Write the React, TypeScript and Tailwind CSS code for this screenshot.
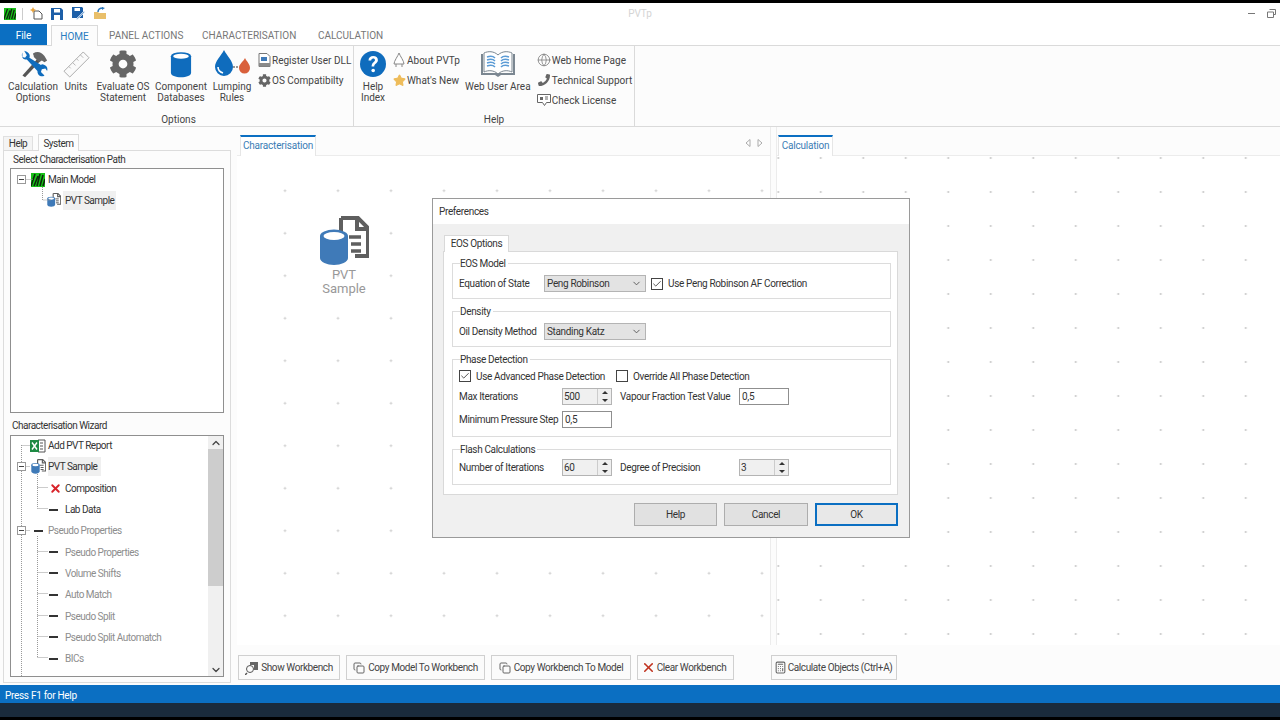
import React from 'react';
import { Globe, Star, X, Copy, Calculator, ChevronUp, ChevronDown, Check } from 'lucide-react';
import { FaCog, FaPhoneAlt } from 'react-icons/fa';

const font = "font-['Roboto','Noto_Sans',sans-serif]";

function AppLogo({ size = 14 }: { size?: number }) {
  return (
    <svg width={size} height={size} viewBox="0 0 14 14">
      <rect width="14" height="14" fill="#19c219" />
      <path d="M0 13 4 1M3 13 7 3M6 13 9 1M9 13 12 2M12 13 14 6" stroke="#0c2a0c" strokeWidth="1.6" fill="none" />
    </svg>
  );
}

function ToolsIcon() {
  return (
    <svg width="30" height="28" viewBox="0 0 34 30">
      <path d="M5 28 22 9l3 3L8 30Z" fill="#555" />
      <path d="M17 3c5-3 9-2 13 3l3 5-3 2-3-2-3 2-6-6c0-2-1-3-1-4Z" fill="#666" />
      <path d="M5 2c-1 2-1 5 1 7 2 1 3 1 4 1l12 13c0 3 1 5 4 6 2 0 3 0 4-1l-4-4 1-3 4-1 2 3c1-3 0-6-3-7-2-1-3-1-4 0L13 8c1-3 0-5-3-7L7 0l3 5-2 3-3-1Z" fill="#0f6cbd" />
    </svg>
  );
}

function RulerIcon() {
  return (
    <svg width="27" height="27" viewBox="0 0 28 28">
      <path d="M1 21 21 1l6 6L7 27Z" fill="#fafafa" stroke="#a9a9a9" strokeWidth="1" />
      <path d="M6 16l2 2M10 12l3 3M14 8l2 2M18 4l3 3" stroke="#b5b5b5" strokeWidth="1" />
    </svg>
  );
}

function CylinderIcon() {
  return (
    <svg width="22" height="27" viewBox="0 0 24 28">
      <path d="M1 5v18c0 3 5 5 11 5s11-2 11-5V5Z" fill="#0f6cbd" />
      <ellipse cx="12" cy="5" rx="11" ry="4.5" fill="#0f6cbd" />
      <ellipse cx="12" cy="5" rx="8.5" ry="2.8" fill="#fff" />
    </svg>
  );
}

function DropsIcon() {
  return (
    <svg width="38" height="28" viewBox="0 0 38 28">
      <path d="M11 0c3 6 9 11 9 17a9 9 0 0 1-18 0c0-6 6-11 9-17Z" fill="#0f6cbd" />
      <path d="M5 17c0 3 2 5 5 6" stroke="#fff" strokeWidth="1.6" fill="none" />
      <path d="M20 17h6" stroke="#777" strokeWidth="1.5" strokeDasharray="2 1" />
      <path d="M32 8c2 4 5 6 5 10a5.500 5.500 0 0 1-11 0c0-4 4-6 6-10Z" fill="#d9603b" />
    </svg>
  );
}

function HelpIcon() {
  return (
    <svg width="26" height="26" viewBox="0 0 26 26">
      <circle cx="13" cy="13" r="13" fill="#0f6cbd" />
      <path d="M8.500 9.500c0-3 2-4.500 4.700-4.500 2.800 0 4.700 1.600 4.700 4 0 3.500-3.700 3.400-3.700 6.500h-2.600c0-4.300 3.400-4.200 3.400-6.400 0-1-.7-1.700-1.800-1.700-1.200 0-1.900.8-2 2.100Z" fill="#fff" />
      <circle cx="13.200" cy="19.500" r="1.800" fill="#fff" />
    </svg>
  );
}

function BookIcon() {
  return (
    <svg width="36" height="28" viewBox="0 0 36 28">
      <path d="M1 4v21h14l3 2 3-2h14V4h-2v19H3V4Z" fill="#7b8791" />
      <path d="M18 5C14 1 8 1 4 3v19c4-2 10-2 14 2 4-4 10-4 14-2V3c-4-2-10-2-14 2Z" fill="#fff" stroke="#7b8791" strokeWidth="1" />
      <path d="M7 7c3-1 6-1 8 1M7 10c3-1 6-1 8 1M7 13c3-1 6-1 8 1M7 16c3-1 6-1 8 1M21 8c2-2 5-2 8-1M21 11c2-2 5-2 8-1M21 14c2-2 5-2 8-1M21 17c2-2 5-2 8-1" stroke="#5b9bd5" strokeWidth="1.6" fill="none" />
    </svg>
  );
}

function SampleIcon({ size = 14 }: { size?: number }) {
  return (
    <svg width={size} height={size} viewBox="0 0 50 48">
      <path d="M22 1h17l10 10v28H36" fill="none" stroke="#5f5f5f" strokeWidth="4" />
      <path d="M22 17V1M38 1v11h11" fill="none" stroke="#5f5f5f" strokeWidth="4" />
      <path d="M30 20h12M32 27h10M32 34h10" stroke="#5f5f5f" strokeWidth="3.500" />
      <path d="M1 19v22c0 4 7 7 14 7s14-3 14-7V19Z" fill="#3f7ab8" />
      <ellipse cx="15" cy="19" rx="14" ry="6.500" fill="#3f7ab8" />
      <ellipse cx="15" cy="19" rx="10.500" ry="4" fill="#fff" />
    </svg>
  );
}

function SmallDoc() {
  return (
    <svg width="13" height="14" viewBox="0 0 13 14">
      <path d="M1 .5h8l3 3v10H1Z" fill="#fff" stroke="#777" />
      <rect x="3" y="4" width="6" height="4" fill="#3f7ab8" />
      <rect x="1" y="10" width="11" height="3.500" fill="#8a8a8a" />
    </svg>
  );
}

function ExcelIcon() {
  return (
    <svg width="16" height="14" viewBox="0 0 16 14">
      <path d="M8 1h7v12H8" fill="#fff" stroke="#555" />
      <path d="M10 4h3M10 7h3M10 10h3" stroke="#555" />
      <rect y="1" width="9" height="12" fill="#1e8a44" />
      <path d="M2 3.500 7 10.500M7 3.500 2 10.500" stroke="#fff" strokeWidth="1.400" />
    </svg>
  );
}

function Expander({ className }: { className: string }) {
  return (
    <span className={`absolute w-[9px] h-[9px] border border-[#999] bg-white flex items-center justify-center ${className}`}>
      <span className="w-[5px] h-px bg-[#444]" />
    </span>
  );
}

function LargeButton({ icon, lines, className }: { icon: React.ReactNode; lines: string[]; className: string }) {
  return (
    <div className={`flex flex-col items-center shrink-0 ${className}`}>
      <div className="h-[34px] flex items-center justify-center">{icon}</div>
      <div className="text-center text-[10px] leading-[11px] text-[#444] whitespace-nowrap">
        {lines.map(l => <div key={l}>{l}</div>)}
      </div>
    </div>
  );
}

function SmallButton({ icon, label }: { icon: React.ReactNode; label: string }) {
  return (
    <div className="h-[20px] flex items-center gap-[1px] text-[10px] text-[#444] whitespace-nowrap">
      <span className="w-[14px] flex justify-center shrink-0">{icon}</span>
      {label}
    </div>
  );
}

const WIZARD_ROWS = [
  { label: 'Add PVT Report', level: 0, icon: 'excel', dim: false },
  { label: 'PVT Sample', level: 0, icon: 'sample', dim: false, selected: true },
  { label: 'Composition', level: 1, icon: 'x', dim: false },
  { label: 'Lab Data', level: 1, icon: 'dash', dim: false },
  { label: 'Pseudo Properties', level: 0, icon: 'dash', dim: true },
  { label: 'Pseudo Properties', level: 1, icon: 'dash', dim: true },
  { label: 'Volume Shifts', level: 1, icon: 'dash', dim: true },
  { label: 'Auto Match', level: 1, icon: 'dash', dim: true },
  { label: 'Pseudo Split', level: 1, icon: 'dash', dim: true },
  { label: 'Pseudo Split Automatch', level: 1, icon: 'dash', dim: true },
  { label: 'BICs', level: 1, icon: 'dash', dim: true },
];

function WizardIcon({ kind }: { kind: string }) {
  if (kind === 'excel') return <ExcelIcon />;
  if (kind === 'sample') return <SampleIcon size={15} />;
  if (kind === 'x') return <X size={13} strokeWidth={3.5} className="text-[#d8232a]" />;
  return <span className="w-[9px] h-[2px] bg-[#333]" />;
}

function TreeLines({ d, h }: { d: string; h: number }) {
  return (
    <svg className="absolute left-0 top-0" width="200" height={h}>
      <path d={d} stroke="#999" strokeDasharray="1 1" fill="none" />
    </svg>
  );
}

function Select({ value, className }: { value: string; className: string }) {
  return (
    <div className={`h-[17px] bg-[#e3e3e3] border border-[#b4b4b4] flex items-center justify-between pl-[2px] pr-[3px] ${className}`}>
      <span>{value}</span>
      <ChevronDown size={11} className="text-[#555]" />
    </div>
  );
}

function CheckBox({ checked, label }: { checked?: boolean; label: string }) {
  return (
    <div className="flex items-center gap-[5px] whitespace-nowrap">
      <span className="w-[12px] h-[12px] border border-[#444] bg-white flex items-center justify-center">
        {checked && <Check size={10} strokeWidth={2} className="text-[#333]" />}
      </span>
      {label}
    </div>
  );
}

function Spinner({ value }: { value: string }) {
  return (
    <div className="w-[50px] h-[17px] border border-[#b4b4b4] bg-[#f0f0f0] flex items-center justify-between pl-[1px]">
      <span>{value}</span>
      <span className="w-[14px] h-full flex flex-col bg-[#efefef] border-l border-[#ccc]">
        <span className="flex-1 flex items-center justify-center"><span className="w-0 h-0 border-x-[3px] border-x-transparent border-b-[3px] border-b-[#333]" /></span>
        <span className="flex-1 flex items-center justify-center"><span className="w-0 h-0 border-x-[3px] border-x-transparent border-t-[3px] border-t-[#333]" /></span>
      </span>
    </div>
  );
}

function TextBox({ value }: { value: string }) {
  return <div className="w-[50px] h-[17px] border border-[#8f8f8f] bg-white flex items-center pl-[2px]">{value}</div>;
}

function Group({ title, className, children }: { title: string; className: string; children: React.ReactNode }) {
  return (
    <fieldset className={`border border-[#dcdcdc] px-[6px] ${className}`}>
      <legend className="ml-[1px] pr-[2px] leading-[16px] h-[14px]">{title}</legend>
      {children}
    </fieldset>
  );
}

function BottomButton({ icon, label, className }: { icon: React.ReactNode; label: string; className: string }) {
  return (
    <div className={`h-[25px] border border-[#d0d0d0] bg-[#fbfbfb] flex items-center justify-center gap-[1px] text-[10px] tracking-[-0.4px] text-[#444] whitespace-nowrap ${className}`}>
      {icon}
      {label}
    </div>
  );
}

const dot = 'bg-[radial-gradient(circle,#c8c8c8_0.9px,transparent_1.2px)]';

export default function App() {
  return (
    <div className={`relative w-[1280px] h-[720px] overflow-hidden flex flex-col bg-[#fcfcfc] text-[#333] ${font}`}>
      <div className="h-[3px] bg-black shrink-0" />

      {/* title bar */}
      <div className="relative h-[21px] shrink-0 bg-white flex items-center pl-[4px]">
        <AppLogo size={12} />
        <span className="ml-[6px] w-px h-[12px] bg-[#ccc]" />
        <span className="ml-[7px]">
          <svg width="13" height="13" viewBox="0 0 13 13"><path d="M4 4h5l3 3v5H4Z" fill="#fff" stroke="#555" /><path d="M3 0l1 2 2 1-2 1-1 2-1-2-2-1 2-1Z" fill="#e8a33d" /></svg>
        </span>
        <span className="ml-[8px]">
          <svg width="12" height="12" viewBox="0 0 12 12"><path d="M0 0h10l2 2v10H0Z" fill="#1d5fa8" /><rect x="3" y="1" width="6" height="3.500" fill="#fff" /><rect x="3" y="7" width="6" height="5" fill="#fff" /></svg>
        </span>
        <span className="ml-[9px]">
          <svg width="13" height="13" viewBox="0 0 13 13"><path d="M0 0h10l1 1v10H0Z" fill="#1d5fa8" /><rect x="2.500" y="1" width="5.500" height="3" fill="#fff" /><path d="M5 11l7-7 1 1-7 7-2 1Z" fill="#7ba6d4" stroke="#fff" strokeWidth=".6" /></svg>
        </span>
        <span className="ml-[9px]">
          <svg width="13" height="13" viewBox="0 0 13 13"><path d="M0 5h4l1 1h7v6H0Z" fill="#e9bf6a" /><path d="M4 5c0-3 2-4 5-4" stroke="#2d78bd" strokeWidth="1.500" fill="none" /><path d="M8 0l3 1-3 2Z" fill="#2d78bd" /></svg>
        </span>
        <span className="absolute left-0 right-0 text-center text-[10px] text-[#d4d4d4]">PVTp</span>
        <span className="absolute right-[25px] w-[7px] h-px bg-[#777]" />
        <svg className="absolute right-[4px]" width="9" height="9" viewBox="0 0 9 9"><path d="M2.500.5h6v5h-2M.5 3h6v5.500h-6Z" fill="none" stroke="#777" /></svg>
      </div>

      {/* ribbon tabs */}
      <div className="h-[22px] shrink-0 flex items-end bg-white border-b border-[#dadada] text-[10px] text-[#777]">
        <div className="w-[47px] h-[21px] pt-[1px] bg-[#0b6fc2] text-white flex items-center justify-center">File</div>
        <div className="ml-[4px] w-[47px] h-[21px] -mb-px border border-b-0 border-[#dadada] bg-[#fcfcfc] text-[#2b7cc0] flex items-center justify-center">HOME</div>
        <div className="ml-[11px] w-[74px] h-[21px] pt-[1px] flex items-center whitespace-nowrap">PANEL ACTIONS</div>
        <div className="ml-[19px] w-[96px] h-[21px] pt-[1px] flex items-center whitespace-nowrap">CHARACTERISATION</div>
        <div className="ml-[20px] h-[21px] pt-[1px] flex items-center whitespace-nowrap">CALCULATION</div>
      </div>

      {/* ribbon */}
      <div className="h-[81px] shrink-0 flex border-b border-[#dadada] bg-[#fcfcfc]">
        <div className="w-[354px] shrink-0 border-r border-[#dadada] flex flex-col">
          <div className="flex h-[65px] pt-[1px]">
            <LargeButton icon={<ToolsIcon />} lines={['Calculation', 'Options']} className="w-[48px] ml-[9px]" />
            <LargeButton icon={<RulerIcon />} lines={['Units']} className="w-[26px] ml-[6px]" />
            <LargeButton icon={<FaCog size={28} className="text-[#666]" />} lines={['Evaluate OS', 'Statement']} className="w-[54px] ml-[7px]" />
            <LargeButton icon={<CylinderIcon />} lines={['Component', 'Databases']} className="w-[50px] ml-[6px]" />
            <LargeButton icon={<DropsIcon />} lines={['Lumping', 'Rules']} className="w-[40px] ml-[6px]" />
            <div className="ml-[5px] mt-[3px] flex flex-col">
              <SmallButton icon={<SmallDoc />} label="Register User DLL" />
              <SmallButton icon={<FaCog size={13} className="text-[#666]" />} label="OS Compatibilty" />
            </div>
          </div>
          <div className="text-center text-[10px] text-[#444] leading-[12px] mt-[4px] pl-[4px]">Options</div>
        </div>
        <div className="w-[281px] shrink-0 border-r border-[#dadada] flex flex-col">
          <div className="flex h-[65px] pt-[1px]">
            <LargeButton icon={<HelpIcon />} lines={['Help', 'Index']} className="w-[30px] ml-[4px]" />
            <div className="ml-[4px] mt-[3px] flex flex-col">
              <SmallButton icon={<svg width="12" height="14" viewBox="0 0 12 14"><path d="M6 0c1 3 5 8 5 11H1c0-3 4-8 5-11Z" fill="#fff" stroke="#888" /><path d="M3 11v3M9 11v3" stroke="#888" /></svg>} label="About PVTp" />
              <SmallButton icon={<Star size={13} fill="#eebc5a" className="text-[#eebc5a]" />} label="What's New" />
            </div>
            <LargeButton icon={<BookIcon />} lines={['Web User Area']} className="w-[66px] ml-[5px]" />
            <div className="ml-[6px] mt-[3px] flex flex-col">
              <SmallButton icon={<Globe size={14} strokeWidth={1.3} className="text-[#777]" />} label="Web Home Page" />
              <SmallButton icon={<FaPhoneAlt size={12} className="text-[#666] -scale-x-100" />} label="Technical Support" />
              <SmallButton icon={<svg width="14" height="12" viewBox="0 0 14 12"><path d="M.5.5h13v8h-4l-2 3-2-3h-5Z" fill="#fff" stroke="#666" /><rect x="3" y="3" width="3" height="3" fill="#666" /><path d="M8 3h3M8 5h3" stroke="#666" /></svg>} label="Check License" />
            </div>
          </div>
          <div className="text-center text-[10px] text-[#444] leading-[12px] mt-[4px]">Help</div>
        </div>
      </div>

      {/* main area */}
      <div className="flex-1 min-h-0 flex">
        {/* left column */}
        <div className="w-[232px] shrink-0 pl-[3px] pt-[6px] flex flex-col text-[10px] tracking-[-0.5px]">
          <div className="flex items-end h-[17px] text-[#333]">
            <div className="w-[30px] h-[14px] bg-[#f4f4f4] border border-b-0 border-[#e0e0e0] flex items-center justify-center">Help</div>
            <div className="ml-[5px] w-[41px] h-[17px] -mb-px z-10 bg-[#fdfdfd] border border-b-0 border-[#dcdcdc] flex items-center justify-center">System</div>
          </div>
          <div className="w-[228px] h-[533px] border border-[#dcdcdc] pl-[6px] flex flex-col">
            <div className="h-[17px] pl-[3px] flex items-center">Select Characterisation Path</div>
            <div className="relative w-[214px] h-[245px] border border-[#8f8f8f] bg-white">
              <TreeLines d="M15.500 10.500H22M31.500 18V31H40" h={60} />
              <Expander className="left-[6px] top-[6px]" />
              <div className="h-[21px] flex items-center pl-[20px] gap-[3px]">
                <AppLogo size={14} />
                <span>Main Model</span>
              </div>
              <div className="h-[20px] flex items-center pl-[36px]">
                <SampleIcon size={14} />
                <span className="ml-[2px] h-[19px] px-[2px] bg-[#f0f0f0] flex items-center">PVT Sample</span>
              </div>
            </div>
            <div className="h-[17px] mt-[4px] mb-[1px] pl-[2px] flex items-center">Characterisation Wizard</div>
            <div className="relative w-[214px] h-[242px] border border-[#8f8f8f] bg-white overflow-hidden">
              <TreeLines d="M10.500 9V242M10.500 9.500H19M10.500 30.500H19M10.500 94.500H19M26.500 36V72.500M26.500 51.500H37M26.500 72.500H37M26.500 100V221.500M26.500 115.500H37M26.500 136.500H37M26.500 157.500H37M26.500 179.500H37M26.500 200.500H37M26.500 221.500H37" h={242} />
              <Expander className="left-[6px] top-[26px]" />
              <Expander className="left-[6px] top-[90px]" />
              <div className="-mt-[1px]">
                {WIZARD_ROWS.map((row, i) => (
                  <div key={i} className={`relative h-[21.3px] flex items-center ${row.level === 0 ? 'pl-[19px]' : 'pl-[38px]'} ${row.dim ? 'text-[#8d8d8d]' : 'text-[#333]'}`}>
                    <span className={`${row.level === 0 ? 'w-[18px] pr-[2px] justify-center' : 'w-[16px]'} flex items-center shrink-0`}>
                      <WizardIcon kind={row.icon} />
                    </span>
                    <span className={row.selected ? 'bg-[#f0f0f0] h-[19px] flex items-center pr-[4px] -mr-[4px]' : ''}>{row.label}</span>
                  </div>
                ))}
              </div>
              <div className="absolute right-0 top-0 bottom-0 w-[15px] bg-[#f0f0f0] flex flex-col items-center">
                <div className="h-[13px] flex items-center"><ChevronUp size={12} strokeWidth={2.5} className="text-[#444]" /></div>
                <div className="w-full h-[137px] bg-[#cdcdcd]" />
                <div className="mt-auto h-[13px] flex items-center"><ChevronDown size={12} strokeWidth={2.5} className="text-[#444]" /></div>
              </div>
            </div>
          </div>
        </div>

        {/* workbench */}
        <div className="flex-1 min-w-0 flex flex-col pl-[5px]">
          <div className="h-[518px] flex">
            <div className="w-[534px] shrink-0 flex flex-col border-r border-[#ececec]">
              <div className="h-[29px] shrink-0 relative pl-[3px] pt-[8px] border-b border-[#ececec]">
                <div className="w-[76px] h-[21px] pb-[2px] border-t-2 border-t-[#0b6fc2] border-x border-x-[#e6e6e6] bg-white text-[#3b7db5] text-[10px] tracking-[-0.2px] flex items-center justify-center">Characterisation</div>
                <svg className="absolute left-[508px] top-[12px]" width="18" height="8" viewBox="0 0 18 8"><path d="M5 .5 1 4l4 3.500ZM13 .5 17 4l-4 3.500Z" fill="#fff" stroke="#aaa" /></svg>
              </div>
              <div className={`relative flex-1 bg-white ${dot} bg-[size:53px_42.5px] bg-[position:21.5px_13.5px]`}>
                <div className="absolute left-[82px] top-[60px] w-[50px] flex flex-col items-center text-[13px] leading-[14px] text-[#999]">
                  <SampleIcon size={50} />
                  <span className="mt-[2px]">PVT</span>
                  <span>Sample</span>
                </div>
              </div>
            </div>
            <div className="ml-[5px] flex-1 min-w-0 flex flex-col border-l border-[#ececec]">
              <div className="h-[29px] shrink-0 pl-[1px] pt-[8px] border-b border-[#ececec]">
                <div className="w-[55px] h-[21px] pb-[2px] border-t-2 border-t-[#0b6fc2] border-x border-x-[#e6e6e6] bg-white text-[#3b7db5] text-[10px] tracking-[-0.2px] flex items-center justify-center">Calculation</div>
              </div>
              <div className={`flex-1 bg-white ${dot} bg-[size:42.5px_34px] bg-[position:-20px_-15px]`} />
            </div>
          </div>
          <div className="flex mt-[10px] pl-[1px]">
            <BottomButton icon={<svg className="shrink-0 mr-[1px]" width="14" height="14" viewBox="0 0 14 14"><circle cx="5" cy="8" r="3.500" fill="none" stroke="#555" /><path d="M2 12l-2 2" stroke="#555" strokeWidth="1.500" /><path d="M5 1h8v8H9V4H5Z" fill="#666" /></svg>} label="Show Workbench" className="w-[102px]" />
            <BottomButton icon={<Copy size={12} className="text-[#666] mr-[2px] shrink-0" />} label="Copy Model To Workbench" className="w-[139px] ml-[6px]" />
            <BottomButton icon={<Copy size={12} className="text-[#666] mr-[2px] shrink-0" />} label="Copy Workbench To Model" className="w-[140px] ml-[6px]" />
            <BottomButton icon={<X size={15} strokeWidth={2.5} className="text-[#c0321f] shrink-0" />} label="Clear Workbench" className="w-[97px] ml-[6px] pr-[4px]" />
            <BottomButton icon={<Calculator size={13} className="text-[#666] shrink-0" />} label="Calculate Objects (Ctrl+A)" className="w-[126px] ml-[37px] pr-[2px]" />
          </div>
        </div>
      </div>

      {/* status */}
      <div className="h-[18px] shrink-0 bg-[#0b6fc2] text-white text-[10px] tracking-[-0.3px] flex items-center pl-[5px] pt-[3px]">Press F1 for Help</div>
      <div className="h-[14px] shrink-0 bg-[#1a2b3c]" />
      <div className="h-[3px] shrink-0 bg-black" />

      {/* Preferences dialog */}
      <div className="absolute left-[432px] top-[198px] w-[478px] h-[340px] border border-[#9a9a9a] bg-[#f0f0f0] text-[10px] tracking-[-0.35px] text-[#333] whitespace-nowrap flex flex-col">
        <div className="h-[25px] shrink-0 bg-white flex items-center pl-[6px]">Preferences</div>
        <div className="pl-[11px] pt-[10px] h-[27px] shrink-0 flex items-end">
          <div className="w-[65px] h-[17px] pb-[2px] -mb-px z-10 bg-white border border-b-0 border-[#d9d9d9] flex items-center justify-center">EOS Options</div>
        </div>
        <div className="ml-[10px] w-[455px] h-[244px] bg-white border border-[#d9d9d9] pl-[8px] pt-[4px] flex flex-col gap-[5px]">
          <Group title="EOS Model" className="w-[439px] h-[43px]">
            <div className="flex items-center mt-[5px]">
              <span className="w-[85px]">Equation of State</span>
              <Select value="Peng Robinson" className="w-[102px]" />
              <span className="ml-[5px]"><CheckBox checked label="Use Peng Robinson AF Correction" /></span>
            </div>
          </Group>
          <Group title="Density" className="w-[439px] h-[43px]">
            <div className="flex items-center mt-[5px]">
              <span className="w-[85px]">Oil Density Method</span>
              <Select value="Standing Katz" className="w-[102px]" />
            </div>
          </Group>
          <Group title="Phase Detection" className="w-[439px] h-[85px]">
            <div className="flex items-center mt-[2px] h-[16px]">
              <CheckBox checked label="Use Advanced Phase Detection" />
              <span className="ml-[11px]"><CheckBox label="Override All Phase Detection" /></span>
            </div>
            <div className="flex items-center mt-[4px]">
              <span className="w-[103px]">Max Iterations</span>
              <Spinner value="500" />
              <span className="ml-[8px] w-[119px]">Vapour Fraction Test Value</span>
              <TextBox value="0,5" />
            </div>
            <div className="flex items-center mt-[6px]">
              <span className="w-[103px]">Minimum Pressure Step</span>
              <TextBox value="0,5" />
            </div>
          </Group>
          <Group title="Flash Calculations" className="w-[439px] h-[43px]">
            <div className="flex items-center mt-[3px]">
              <span className="w-[103px]">Number of Iterations</span>
              <Spinner value="60" />
              <span className="ml-[8px] w-[119px]">Degree of Precision</span>
              <Spinner value="3" />
            </div>
          </Group>
        </div>
        <div className="flex justify-end gap-[7px] mt-[8px] pr-[11px]">
          <div className="w-[83px] h-[23px] bg-[#e1e1e1] border border-[#adadad] flex items-center justify-center">Help</div>
          <div className="w-[84px] h-[23px] bg-[#e1e1e1] border border-[#adadad] flex items-center justify-center">Cancel</div>
          <div className="w-[83px] h-[23px] bg-[#e8e8e8] border-2 border-[#0b6fc2] flex items-center justify-center">OK</div>
        </div>
      </div>
    </div>
  );
}
